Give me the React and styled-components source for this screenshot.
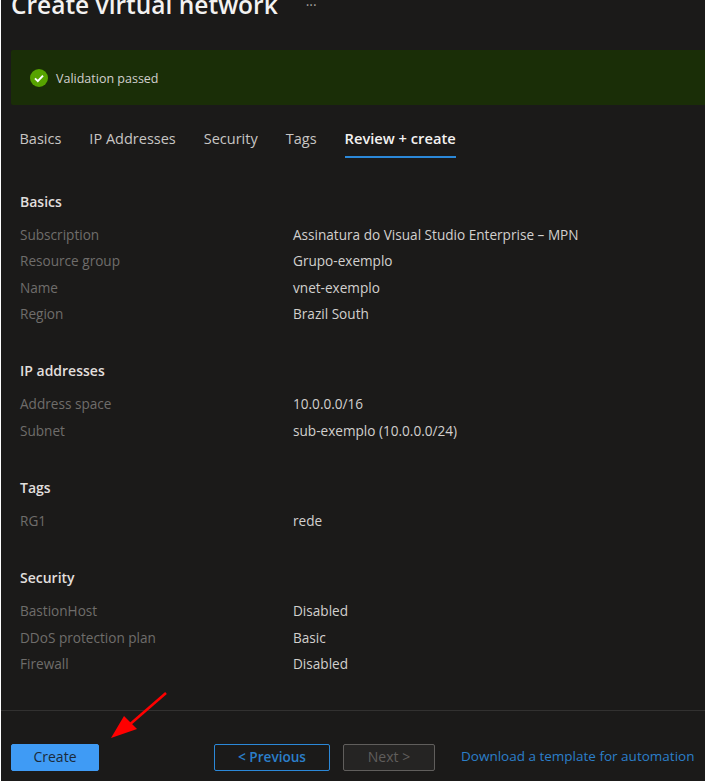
import styled, { createGlobalStyle } from "styled-components";

const GlobalStyle = createGlobalStyle`
  html, body {
    margin: 0;
    padding: 0;
    background: #fff;
  }
  body {
    font-family: "Open Sans", "Noto Sans", sans-serif;
  }
`;

const sections = [
  {
    title: "Basics",
    rows: [
      ["Subscription", "Assinatura do Visual Studio Enterprise – MPN"],
      ["Resource group", "Grupo-exemplo"],
      ["Name", "vnet-exemplo"],
      ["Region", "Brazil South"],
    ],
  },
  {
    title: "IP addresses",
    rows: [
      ["Address space", "10.0.0.0/16"],
      ["Subnet", "sub-exemplo (10.0.0.0/24)"],
    ],
  },
  { title: "Tags", rows: [["RG1", "rede"]] },
  {
    title: "Security",
    rows: [
      ["BastionHost", "Disabled"],
      ["DDoS protection plan", "Basic"],
      ["Firewall", "Disabled"],
    ],
  },
];

const tabs = ["Basics", "IP Addresses", "Security", "Tags", "Review + create"];

const App = () => {
  return (
    <Page>
      <GlobalStyle />
      <TitleBar>
        <Title>Create virtual network</Title>
        <Dots>···</Dots>
      </TitleBar>
      <Banner>
        <svg width="18" height="18" viewBox="0 0 18 18">
          <circle cx="9" cy="9" r="9" fill="#57a300" />
          <path d="M5 9.4l2.8 2.7L13 6.6" fill="none" stroke="#fff" strokeWidth="2" />
        </svg>
        <BannerText>Validation passed</BannerText>
      </Banner>
      <Tabs>
        {tabs.map((t, i) => (
          <Tab key={t} $active={i === 4}>{t}</Tab>
        ))}
      </Tabs>
      <Summary>
        {sections.map((s) => (
          <Section key={s.title}>
            <SectionTitle>{s.title}</SectionTitle>
            {s.rows.map(([label, value]) => (
              <Row key={label}>
                <Label>{label}</Label>
                <Value>{value}</Value>
              </Row>
            ))}
          </Section>
        ))}
      </Summary>
      <Footer>
        <CreateButton>Create</CreateButton>
        <PrevButton>&lt; Previous</PrevButton>
        <NextButton>Next &gt;</NextButton>
        <TemplateLink>Download a template for automation</TemplateLink>
      </Footer>
      <Arrow width="70" height="60" viewBox="0 0 70 60">
        <path d="M60 2L22 35" stroke="#f00" strokeWidth="2.5" fill="none" />
        <path d="M5 47L18 25L31 38Z" fill="#f00" />
      </Arrow>
    </Page>
  );
};

export default App;

const Page = styled.div`
  position: relative;
  width: 704px;
  height: 781px;
  margin-left: 1px;
  background: #1b1a19;
  overflow: hidden;
`;
const TitleBar = styled.div`
  display: flex;
  align-items: flex-start;
  height: 50px;
  padding-left: 10px;
`;
const Title = styled.h1`
  margin: -11px 0 0 0;
  font-size: 24.5px;
  line-height: 32px;
  font-weight: 600;
  color: #f3f2f1;
`;
const Dots = styled.span`
  margin: -5px 0 0 28px;
  font-size: 14px;
  line-height: 20px;
  color: #a19f9d;
`;
const Banner = styled.div`
  display: flex;
  align-items: center;
  gap: 8px;
  height: 55px;
  margin-left: 10px;
  padding-left: 19px;
  background: #1a2e07;
  border-radius: 2px 0 0 2px;
`;
const BannerText = styled.span`
  padding-top: 1px;
  font-size: 12.5px;
  color: #d2d0ce;
`;
const Tabs = styled.div`
  display: flex;
  gap: 28px;
  height: 53px;
  margin-left: 18.5px;
`;
const Tab = styled.div`
  display: flex;
  align-items: center;
  height: 100%;
  box-sizing: border-box;
  padding-top: ${(p) => (p.$active ? "15px" : "16px")};
  font-size: ${(p) => (p.$active ? "14.7px" : "14.5px")};
  font-weight: ${(p) => (p.$active ? 600 : 400)};
  color: ${(p) => (p.$active ? "#f3f2f1" : "#c8c6c4")};
  border-bottom: 2px solid ${(p) => (p.$active ? "#2b88d8" : "transparent")};
`;
const Summary = styled.div`
  display: flex;
  flex-direction: column;
  gap: 31.5px;
  height: 552px;
  padding: 31px 0 0 19px;
  box-sizing: border-box;
`;
const Section = styled.section`
  display: flex;
  flex-direction: column;
`;
const SectionTitle = styled.h2`
  margin: 0 0 6.5px 0;
  font-size: 14px;
  line-height: 26px;
  font-weight: 600;
  color: #e1dfdd;
`;
const Row = styled.div`
  display: flex;
  height: 26.3px;
  align-items: center;
  font-size: 13.6px;
`;
const Label = styled.div`
  width: 273px;
  color: #6f6d6b;
`;
const Value = styled.div`
  color: #d2d0ce;
`;
const Footer = styled.div`
  display: flex;
  align-items: flex-start;
  height: 71px;
  padding: 33px 0 0 10px;
  box-sizing: border-box;
  border-top: 1px solid #323130;
`;
const BaseButton = styled.button`
  height: 27px;
  padding: 0 0 2px 0;
  border-radius: 2px;
  font-family: inherit;
  font-size: 14px;
`;
const CreateButton = styled(BaseButton)`
  width: 88px;
  border: 1px solid #3f9bf5;
  background: #3f9bf5;
  color: #1b2a3a;
`;
const PrevButton = styled(BaseButton)`
  width: 116px;
  margin-left: 115px;
  border: 1px solid #2b88d8;
  background: transparent;
  color: #2b7fca;
  font-size: 13.6px;
  font-weight: 600;
`;
const NextButton = styled(BaseButton)`
  width: 92px;
  margin-left: 13px;
  border: 1px solid #605e5c;
  background: #252423;
  color: #605e5c;
`;
const TemplateLink = styled.a`
  margin: 3px 0 0 26px;
  font-size: 13.5px;
  color: #2b7fca;
  white-space: nowrap;
`;
const Arrow = styled.svg`
  position: absolute;
  left: 105px;
  top: 691px;
`;
